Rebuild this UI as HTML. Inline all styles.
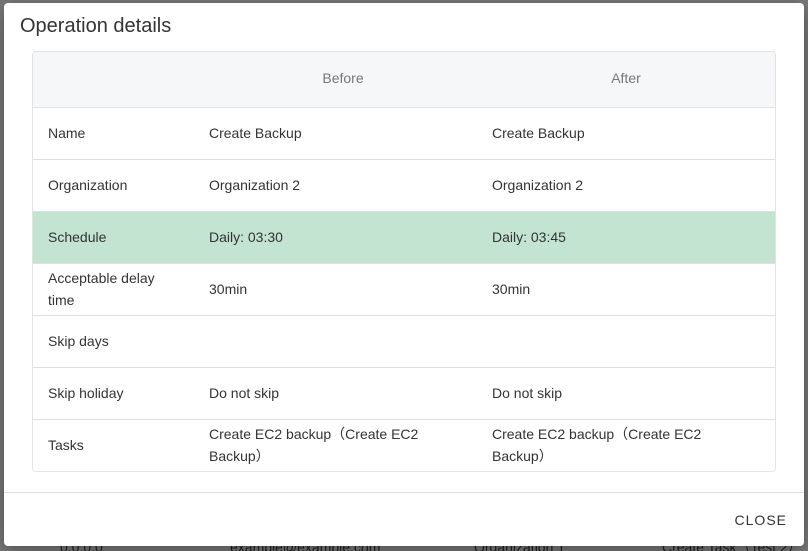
<!DOCTYPE html>
<html style="overflow:hidden;height:551px"><head><style>
html,body{margin:0;width:808px;height:551px;overflow:hidden;}
body{background:#7b7b7b;position:relative;font-family:"Liberation Sans","Noto Sans CJK JP",sans-serif;}
.bgt{position:absolute;top:540px;font-size:14px;line-height:14px;color:#222;}
.dlg{position:absolute;left:4px;top:3px;width:800px;height:543px;background:#fff;border-radius:4px;box-shadow:0 4px 20px rgba(0,0,0,.4);}
.title{position:absolute;left:16px;top:12px;font-size:20px;color:#333;}
.tbl{position:absolute;left:28px;top:48px;width:742px;height:419px;border:1px solid #e3e3e3;border-radius:4px;overflow:hidden;}
.row{position:absolute;left:0;width:742px;height:51px;border-top:1px solid #e0e0e0;font-size:14px;color:#333;}
.row div{position:absolute;top:-1px;height:51px;display:flex;align-items:center;line-height:22px;}
.c1{left:15px;width:128px}.c2{left:176px;width:260px}.c3{left:459px;width:260px}
.hd{top:0;height:55px;border-top:none;background:#f6f7f9;color:#777}
.hd div{height:53px}
.foot{position:absolute;left:0;top:489px;width:800px;border-top:1px solid #e0e0e0;}
.close{position:absolute;right:17px;top:509px;font-size:14px;letter-spacing:1px;color:#333;}
</style></head><body>
<div class="bgt" style="left:60px">0.0.0.0</div>
<div class="bgt" style="left:230px">example@example.com</div>
<div class="bgt" style="left:474px">Organization 1</div>
<div class="bgt" style="left:662px">Create Task（Test 2）</div>
<div class="dlg">
<div class="title">Operation details</div>
<div class="tbl">
<div class="row hd"><div class="c2" style="justify-content:center;left:176px;width:268px">Before</div><div class="c3" style="justify-content:center;left:459px;width:268px">After</div></div>
<div class="row" style="top:55px"><div class="c1">Name</div><div class="c2">Create Backup</div><div class="c3">Create Backup</div></div>
<div class="row" style="top:107px"><div class="c1">Organization</div><div class="c2">Organization 2</div><div class="c3">Organization 2</div></div>
<div class="row" style="top:159px;background:#c3e4d1"><div class="c1">Schedule</div><div class="c2">Daily: 03:30</div><div class="c3">Daily: 03:45</div></div>
<div class="row" style="top:211px"><div class="c1">Acceptable delay time</div><div class="c2">30min</div><div class="c3">30min</div></div>
<div class="row" style="top:263px"><div class="c1">Skip days</div></div>
<div class="row" style="top:315px"><div class="c1">Skip holiday</div><div class="c2">Do not skip</div><div class="c3">Do not skip</div></div>
<div class="row" style="top:367px"><div class="c1">Tasks</div><div class="c2">Create EC2 backup（Create EC2 Backup）</div><div class="c3">Create EC2 backup（Create EC2 Backup）</div></div>
</div>
<div class="foot"></div>
<div class="close">CLOSE</div>
</div>
</body></html>
